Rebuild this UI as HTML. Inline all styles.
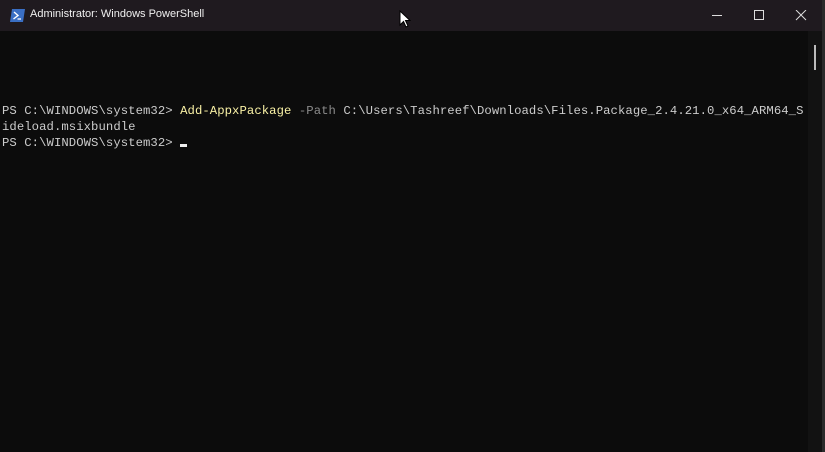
<!DOCTYPE html>
<html><head><meta charset="utf-8"><style>
html,body{margin:0;padding:0;width:825px;height:452px;overflow:hidden;background:#0c0c0c}
.title{position:absolute;left:0;top:0;width:825px;height:31px;background:#1f1a1f;}
.tt{position:absolute;left:30px;top:8px;font:11px "Liberation Sans",sans-serif;color:#f0f0f0}
.term{position:absolute;left:2px;top:103px;font:12.25px/16px "Liberation Mono",monospace;letter-spacing:0.07px;color:#cccccc;white-space:pre}
.y{color:#f9f1a5}.g{color:#8a8a8a}
.cur{display:inline-block;width:7px;height:3px;background:#eee;vertical-align:-1px}
.sb{position:absolute;left:808px;top:31px;width:14px;height:421px;background:#121212}
.thumb{position:absolute;left:814px;top:45px;width:2px;height:25px;background:#bbb}
.edge{position:absolute;left:822px;top:0;width:3px;height:452px;background:#2a2a2a}
</style></head><body>
<div class="title">
<svg style="position:absolute;left:10px;top:9px" width="15" height="13" viewBox="0 0 15 13"><path d="M2 0H15L13 13H0Z" fill="#3a6fc4"/><path d="M4 3L8 6.5L3.5 10" stroke="#fff" stroke-width="1.4" fill="none"/><path d="M7.5 10H11" stroke="#fff" stroke-width="1.3"/></svg>
<div class="tt">Administrator: Windows PowerShell</div>
<svg style="position:absolute;left:712px;top:10px" width="100" height="12" viewBox="0 0 100 12"><path d="M0 5.5H10" stroke="#ddd" stroke-width="1"/><rect x="42.5" y="0.5" width="9" height="9" fill="none" stroke="#ddd" stroke-width="1"/><path d="M84 0L94 10M94 0L84 10" stroke="#ddd" stroke-width="1"/></svg>
</div>
<svg style="position:absolute;left:399px;top:10px" width="12" height="18" viewBox="0 0 12 18"><path d="M1 1V15L4.5 11.5L7 17L9 16L6.5 10.5H11Z" fill="#fff" stroke="#000" stroke-width="1"/></svg>
<div class="sb"></div><div class="thumb"></div><div class="edge"></div>
<div class="term">PS C:\WINDOWS\system32&gt; <span class="y">Add-AppxPackage</span> <span class="g">-Path</span> C:\Users\Tashreef\Downloads\Files.Package_2.4.21.0_x64_ARM64_S
ideload.msixbundle
PS C:\WINDOWS\system32&gt; <span class="cur"></span></div>
</body></html>
